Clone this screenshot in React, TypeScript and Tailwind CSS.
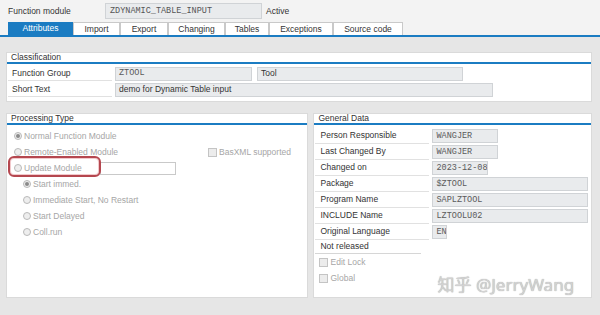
import React from 'react';

// Attributes screen of a function module (SE37 style)

const BLUE = 'border-[#1b7cc2]';

interface TabProps {
  label: string;
  width: string;
  active?: boolean;
}

const Tab: React.FC<TabProps> = ({ label, width, active }) => (
  <div
    className={
      active
        ? `${width} h-[13px] bg-[#1b7cc2] text-white flex items-center justify-center`
        : `${width} h-[13px] bg-white border border-b-0 border-[#c9c9c9] text-[#333] flex items-center justify-center`
    }
  >
    {label}
  </div>
);

const Radio: React.FC<{ checked?: boolean }> = ({ checked }) => (
  <span className="w-[8px] h-[8px] rounded-full border border-[#b9b9b9] bg-[#eeeeee] flex items-center justify-center shrink-0">
    {checked && <span className="w-[4px] h-[4px] rounded-full bg-[#8a8a8a]" />}
  </span>
);

const Check: React.FC = () => (
  <span className="w-[9px] h-[9px] border border-[#c4c4c4] bg-[#ececec] shrink-0" />
);

const Field: React.FC<{ value: string; width: string }> = ({ value, width }) => (
  <div
    className={`${width} h-[14px] bg-[#e9ebed] border border-[#d0d3d6] pl-[3px] flex items-center font-['Liberation_Mono',monospace] text-[8.5px] text-[#5a5a5a] whitespace-nowrap overflow-hidden`}
  >
    {value}
  </div>
);

const PanelHeader: React.FC<{ title: string }> = ({ title }) => (
  <div className={`h-[11px] flex items-center pl-[4px] border-b-2 ${BLUE} text-[#333]`}>{title}</div>
);

const generalRows: { label: string; value: string; width: string }[] = [
  { label: 'Person Responsible', value: 'WANGJER', width: 'w-[66px]' },
  { label: 'Last Changed By', value: 'WANGJER', width: 'w-[66px]' },
  { label: 'Changed on', value: '2023-12-08', width: 'w-[56px]' },
  { label: 'Package', value: '$ZTOOL', width: 'w-[156px]' },
  { label: 'Program Name', value: 'SAPLZTOOL', width: 'w-[156px]' },
  { label: 'INCLUDE Name', value: 'LZTOOLU02', width: 'w-[156px]' },
  { label: 'Original Language', value: 'EN', width: 'w-[15px]' },
];

export default function App() {
  return (
    <div className="w-[600px] h-[315px] overflow-hidden bg-[#e6e6e6] text-[8.5px] leading-none text-[#333] font-['Liberation_Sans',Arial,sans-serif]">
      {/* top header */}
      <div className="bg-[#f3f3f3]">
        <div className="h-[22px] flex items-center">
          <span className="w-[105px] pl-[8px]">Function module</span>
          <div className="w-[157px] h-[16px] bg-[#e9ebed] border border-[#d0d3d6] pl-[4px] flex items-center font-['Liberation_Mono',monospace] text-[8.5px] text-[#555]">
            ZDYNAMIC_TABLE_INPUT
          </div>
          <span className="ml-[4px]">Active</span>
        </div>
        <div className={`flex items-end pl-[8px] border-b-2 ${BLUE}`}>
          <Tab label="Attributes" width="w-[65px]" active />
          <Tab label="Import" width="w-[47px]" />
          <Tab label="Export" width="w-[48px]" />
          <Tab label="Changing" width="w-[57px]" />
          <Tab label="Tables" width="w-[44px]" />
          <Tab label="Exceptions" width="w-[64px]" />
          <Tab label="Source code" width="w-[70px]" />
        </div>
      </div>

      <div className="pl-[6px] pr-[8px] pt-[15px]">
        {/* Classification */}
        <div className="bg-white border border-[#dadada] pb-[4px]">
          <PanelHeader title="Classification" />
          <div className="pt-[2px] flex flex-col gap-[1px]">
            <div className="h-[15px] flex items-center pl-[1px]">
              <div className="w-[104px] h-full pl-[4px] flex items-center border-b border-[#e1e1e1]">Function Group</div>
              <div className="ml-[3px]">
                <Field value="ZTOOL" width="w-[137px]" />
              </div>
              <div className="ml-[5px] w-[206px] h-[14px] bg-[#e9ebed] border border-[#d0d3d6] pl-[3px] flex items-center">Tool</div>
            </div>
            <div className="h-[15px] flex items-center pl-[1px]">
              <div className="w-[104px] h-full pl-[4px] flex items-center border-b border-[#e1e1e1]">Short Text</div>
              <div className="ml-[3px] w-[378px] h-[14px] bg-[#e9ebed] border border-[#d0d3d6] pl-[3px] flex items-center">
                demo for Dynamic Table input
              </div>
            </div>
          </div>
        </div>

        <div className="mt-[11px] flex gap-[5px]">
          {/* Processing Type */}
          <div className="w-[303px] h-[185px] bg-white border border-[#dadada]">
            <PanelHeader title="Processing Type" />
            <div className="pt-[3px] pl-[7px] text-[#a6a6a6]">
              <div className="h-[16px] flex items-center gap-[2px]">
                <Radio checked />
                <span>Normal Function Module</span>
              </div>
              <div className="h-[16px] flex items-center">
                <div className="w-[194px] flex items-center gap-[2px]">
                  <Radio />
                  <span>Remote-Enabled Module</span>
                </div>
                <div className="flex items-center gap-[2px]">
                  <Check />
                  <span>BasXML supported</span>
                </div>
              </div>
              <div className="h-[16px] flex items-center relative">
                <div className="w-[86px] flex items-center gap-[2px]">
                  <Radio />
                  <span>Update Module</span>
                </div>
                <div className="w-[76px] h-[13px] bg-white border border-[#c9c9c9]" />
                {/* red highlight marker */}
                <div className="absolute left-[-6px] top-[-4px] w-[93px] h-[21px] rounded-[6px] border-2 border-[#b5474f] shadow-[inset_0_0_0_1px_#f2c9cc]" />
              </div>
              <div className="pl-[9px]">
                <div className="h-[16px] flex items-center gap-[2px]">
                  <Radio checked />
                  <span>Start immed.</span>
                </div>
                <div className="h-[16px] flex items-center gap-[2px]">
                  <Radio />
                  <span>Immediate Start, No Restart</span>
                </div>
                <div className="h-[16px] flex items-center gap-[2px]">
                  <Radio />
                  <span>Start Delayed</span>
                </div>
                <div className="h-[16px] flex items-center gap-[2px]">
                  <Radio />
                  <span>Coll.run</span>
                </div>
              </div>
            </div>
          </div>

          {/* General Data */}
          <div className="w-[279px] h-[185px] bg-white border border-[#dadada] relative">
            <PanelHeader title="General Data" />
            <div className="pt-[3px] pl-[1px]">
              {generalRows.map((r) => (
                <div key={r.label} className="h-[16px] flex items-center">
                  <div className="w-[114px] h-full pl-[5px] flex items-center border-b border-[#e1e1e1]">{r.label}</div>
                  <div className="ml-[3px]">
                    <Field value={r.value} width={r.width} />
                  </div>
                </div>
              ))}
              <div className="w-[106px] h-[14px] pl-[5px] flex items-center border-b border-[#d6d6d6]">Not released</div>
              <div className="pl-[4px] text-[#a6a6a6]">
                <div className="h-[16px] flex items-center gap-[2px]">
                  <Check />
                  <span>Edit Lock</span>
                </div>
                <div className="h-[16px] flex items-center gap-[2px]">
                  <Check />
                  <span>Global</span>
                </div>
              </div>
            </div>
            {/* watermark */}
            <div className="absolute left-[123px] bottom-[4px] text-[17px] text-[#d2d2d2] font-['Noto_Sans','Noto_Sans_CJK_SC',sans-serif] [text-shadow:0_0_1px_#9a9a9a] whitespace-nowrap">
              知乎 @JerryWang
            </div>
          </div>
        </div>
      </div>
    </div>
  );
}
